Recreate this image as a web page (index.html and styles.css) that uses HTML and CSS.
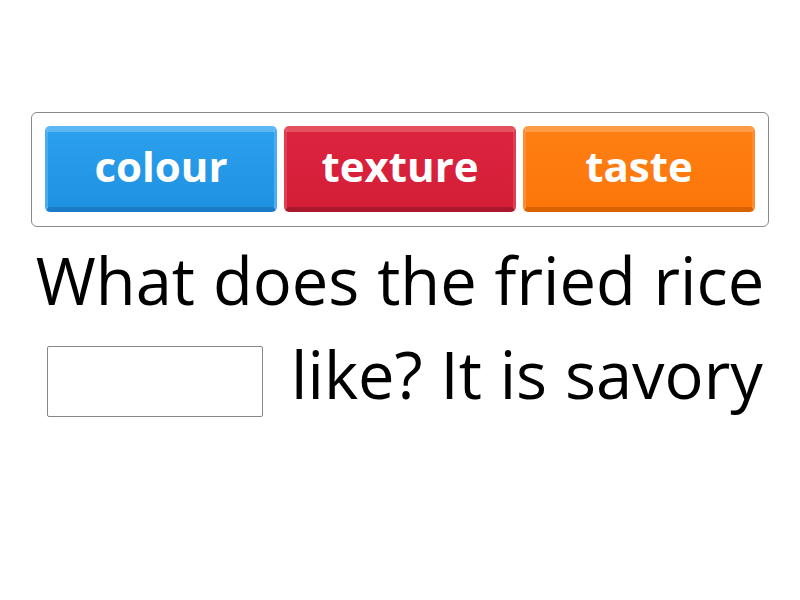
FILE: index.html
```html
<!DOCTYPE html>
<html>
<head>
<meta charset="utf-8">
<link rel="stylesheet" href="styles.css">
</head>
<body>
<div class="page">
  <div class="bank">
    <div class="tile blue">colour</div>
    <div class="tile red">texture</div>
    <div class="tile orange">taste</div>
  </div>
  <p class="sentence">What does the fried rice <span class="blank"></span> like? It is savory</p>
</div>
</body>
</html>
```
FILE: styles.css
```css
html, body {
  margin: 0;
  padding: 0;
  background: #fff;
}
.page {
  padding: 112px 31px 0 31px;
  font-family: "Open Sans", sans-serif;
}
.bank {
  border: 1px solid #8a8a8a;
  border-radius: 6px;
  padding: 13px 13px 14px 13px;
  display: flex;
  gap: 7px;
}
.tile {
  flex: 1;
  height: 86px;
  box-sizing: border-box;
  border-radius: 5px;
  border-style: solid;
  border-width: 6px 3px 5px 3px;
  color: #fff;
  font-weight: 700;
  font-size: 42px;
  display: flex;
  align-items: center;
  justify-content: center;
  padding-bottom: 9px;
}
.blue {
  background: linear-gradient(#2ba0ec, #1f92e2);
  border-color: #5db7f2 #4aaef0 #1a7cc6 #4aaef0;
}
.red {
  background: linear-gradient(#dc2440, #d41d37);
  border-color: #e4515f #de3f52 #a9182c #de3f52;
}
.orange {
  background: linear-gradient(#ff7f12, #fd760a);
  border-color: #ff9a45 #ff8c2f #d86200 #ff8c2f;
}
.sentence {
  margin: 6px -31px 0 -31px;
  text-align: center;
  font-size: 65px;
  line-height: 94px;
  word-spacing: 1px;
  color: #000;
}
.blank {
  display: inline-block;
  width: 216px;
  height: 71px;
  box-sizing: border-box;
  border: 1px solid #888;
  border-radius: 2px;
  vertical-align: -18px;
  margin: 0 10px;
}
```
